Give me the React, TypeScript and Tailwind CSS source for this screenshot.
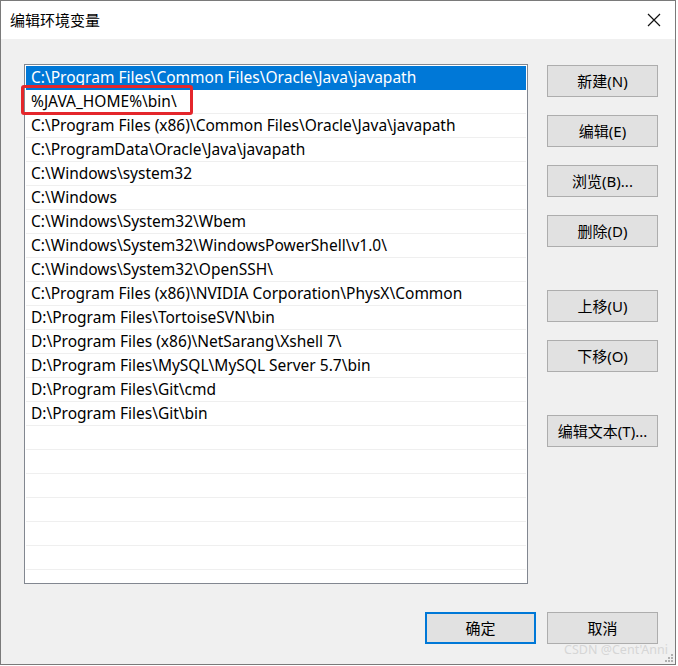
import React from 'react';

const paths = [
  'C:\\Program Files\\Common Files\\Oracle\\Java\\javapath',
  '%JAVA_HOME%\\bin\\',
  'C:\\Program Files (x86)\\Common Files\\Oracle\\Java\\javapath',
  'C:\\ProgramData\\Oracle\\Java\\javapath',
  'C:\\Windows\\system32',
  'C:\\Windows',
  'C:\\Windows\\System32\\Wbem',
  'C:\\Windows\\System32\\WindowsPowerShell\\v1.0\\',
  'C:\\Windows\\System32\\OpenSSH\\',
  'C:\\Program Files (x86)\\NVIDIA Corporation\\PhysX\\Common',
  'D:\\Program Files\\TortoiseSVN\\bin',
  'D:\\Program Files (x86)\\NetSarang\\Xshell 7\\',
  'D:\\Program Files\\MySQL\\MySQL Server 5.7\\bin',
  'D:\\Program Files\\Git\\cmd',
  'D:\\Program Files\\Git\\bin',
];

const rows = [...paths, ...Array(6).fill('')];

const font = { fontFamily: '"Noto Sans", "Noto Sans CJK SC", sans-serif' };

const Btn: React.FC<{ label: string; primary?: boolean }> = ({ label, primary }) => (
  <button
    className={
      'w-[111px] h-[32px] bg-[#e1e1e1] text-[15px] text-black flex items-center justify-center ' +
      (primary ? 'border-2 border-[#0078d7]' : 'border border-[#adadad]')
    }
  >
    {label}
  </button>
);

export default function App() {
  return (
    <div className="w-[678px] h-[666px] bg-white" style={font}>
      <div className="w-[676px] h-[665px] border border-[#7a7a7a] flex flex-col">
        {/* title bar */}
        <div className="h-[38px] bg-white flex items-center justify-between pl-[9px] pr-[14px]">
          <span className="text-[15px] text-black">编辑环境变量</span>
          <svg width="14" height="14" viewBox="0 0 14 14">
            <path d="M1 1 L13 13 M13 1 L1 13" stroke="#111" strokeWidth="1.2" />
          </svg>
        </div>

        {/* body */}
        <div className="flex-1 bg-[#f0f0f0] relative pl-[23px] pt-[25px]">
          <div className="flex">
            <div className="relative w-[504px] h-[520px] border border-[#828790] bg-white p-px">
              <div className="h-full overflow-hidden">
                {rows.map((r, i) => (
                  <div
                    key={i}
                    className={
                      'h-[24px] flex items-center pl-[5px] pt-px text-[15.5px] whitespace-nowrap border-b ' +
                      (i === 0
                        ? 'bg-[#0078d7] text-white border-[#0078d7]'
                        : 'text-black border-[#efefef]')
                    }
                  >
                    {r}
                  </div>
                ))}
              </div>
              {/* highlight */}
              <div className="absolute left-[-4px] top-[20px] w-[172px] h-[30px] border-[3px] border-[#e4262b] rounded-[3px]" />
            </div>

            <div className="ml-[19px] mt-px flex flex-col">
              <div className="flex flex-col gap-[18px]">
                <Btn label="新建(N)" />
                <Btn label="编辑(E)" />
                <Btn label="浏览(B)..." />
                <Btn label="删除(D)" />
              </div>
              <div className="mt-[43px] flex flex-col gap-[18px]">
                <Btn label="上移(U)" />
                <Btn label="下移(O)" />
              </div>
              <div className="mt-[43px]">
                <Btn label="编辑文本(T)..." />
              </div>
            </div>
          </div>

          <div className="flex justify-end gap-[11px] mt-[28px] pr-[17px]">
            <Btn label="确定" primary />
            <Btn label="取消" />
          </div>

          {/* watermark */}
          <span className="absolute right-[7px] bottom-[4px] text-[12.5px] text-[#d6d6d6]">
            CSDN @Cent'Anni
          </span>
          <div className="absolute right-[2px] bottom-[2px] grid grid-cols-3 gap-px">
            <span />
            <span />
            <span className="w-[2px] h-[2px] bg-[#b0b0b0]" />
            <span />
            <span className="w-[2px] h-[2px] bg-[#b0b0b0]" />
            <span className="w-[2px] h-[2px] bg-[#b0b0b0]" />
            <span className="w-[2px] h-[2px] bg-[#b0b0b0]" />
            <span className="w-[2px] h-[2px] bg-[#b0b0b0]" />
            <span className="w-[2px] h-[2px] bg-[#b0b0b0]" />
          </div>
        </div>
      </div>
    </div>
  );
}
